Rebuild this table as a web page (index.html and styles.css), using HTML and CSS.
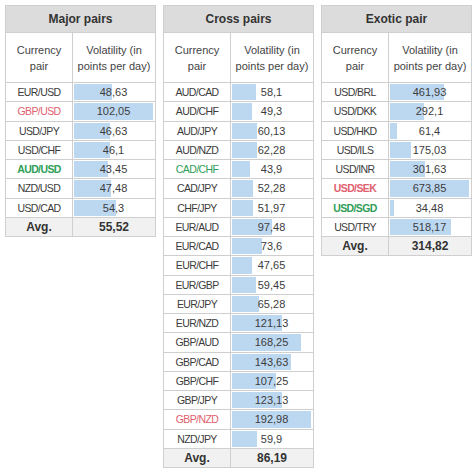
FILE: index.html
```html
<!DOCTYPE html>
<html>
<head>
<meta charset="utf-8">
<link rel="stylesheet" href="styles.css">
</head>
<body>
<div class="wrap">
  <table class="vt">
    <colgroup><col class="c1"><col class="c2"></colgroup>
    <thead>
      <tr class="title"><th colspan="2">Major pairs</th></tr>
      <tr class="head"><th>Currency<br>pair</th><th>Volatility (in<br>points per day)</th></tr>
    </thead>
    <tbody>
      <tr><td class="pair">EUR/USD</td><td class="vol"><div class="cell"><div class="fill" style="width:47.65%"></div><span class="val">48,63</span></div></td></tr>
      <tr><td class="pair red">GBP/USD</td><td class="vol"><div class="cell"><div class="fill" style="width:100%"></div><span class="val">102,05</span></div></td></tr>
      <tr><td class="pair">USD/JPY</td><td class="vol"><div class="cell"><div class="fill" style="width:45.69%"></div><span class="val">46,63</span></div></td></tr>
      <tr><td class="pair">USD/CHF</td><td class="vol"><div class="cell"><div class="fill" style="width:45.17%"></div><span class="val">46,1</span></div></td></tr>
      <tr><td class="pair green strong">AUD/USD</td><td class="vol"><div class="cell"><div class="fill" style="width:42.58%"></div><span class="val">43,45</span></div></td></tr>
      <tr><td class="pair">NZD/USD</td><td class="vol"><div class="cell"><div class="fill" style="width:46.53%"></div><span class="val">47,48</span></div></td></tr>
      <tr><td class="pair">USD/CAD</td><td class="vol"><div class="cell"><div class="fill" style="width:53.21%"></div><span class="val">54,3</span></div></td></tr>
      <tr class="avg"><td>Avg.</td><td>55,52</td></tr>
    </tbody>
  </table>

  <table class="vt">
    <colgroup><col class="c1"><col class="c2"></colgroup>
    <thead>
      <tr class="title"><th colspan="2">Cross pairs</th></tr>
      <tr class="head"><th>Currency<br>pair</th><th>Volatility (in<br>points per day)</th></tr>
    </thead>
    <tbody>
      <tr><td class="pair">AUD/CAD</td><td class="vol"><div class="cell"><div class="fill" style="width:30.11%"></div><span class="val">58,1</span></div></td></tr>
      <tr><td class="pair">AUD/CHF</td><td class="vol"><div class="cell"><div class="fill" style="width:25.55%"></div><span class="val">49,3</span></div></td></tr>
      <tr><td class="pair">AUD/JPY</td><td class="vol"><div class="cell"><div class="fill" style="width:31.16%"></div><span class="val">60,13</span></div></td></tr>
      <tr><td class="pair">AUD/NZD</td><td class="vol"><div class="cell"><div class="fill" style="width:32.27%"></div><span class="val">62,28</span></div></td></tr>
      <tr><td class="pair green">CAD/CHF</td><td class="vol"><div class="cell"><div class="fill" style="width:22.75%"></div><span class="val">43,9</span></div></td></tr>
      <tr><td class="pair">CAD/JPY</td><td class="vol"><div class="cell"><div class="fill" style="width:27.09%"></div><span class="val">52,28</span></div></td></tr>
      <tr><td class="pair">CHF/JPY</td><td class="vol"><div class="cell"><div class="fill" style="width:26.93%"></div><span class="val">51,97</span></div></td></tr>
      <tr><td class="pair">EUR/AUD</td><td class="vol"><div class="cell"><div class="fill" style="width:50.51%"></div><span class="val">97,48</span></div></td></tr>
      <tr><td class="pair">EUR/CAD</td><td class="vol"><div class="cell"><div class="fill" style="width:38.14%"></div><span class="val">73,6</span></div></td></tr>
      <tr><td class="pair">EUR/CHF</td><td class="vol"><div class="cell"><div class="fill" style="width:24.69%"></div><span class="val">47,65</span></div></td></tr>
      <tr><td class="pair">EUR/GBP</td><td class="vol"><div class="cell"><div class="fill" style="width:30.81%"></div><span class="val">59,45</span></div></td></tr>
      <tr><td class="pair">EUR/JPY</td><td class="vol"><div class="cell"><div class="fill" style="width:33.83%"></div><span class="val">65,28</span></div></td></tr>
      <tr><td class="pair">EUR/NZD</td><td class="vol"><div class="cell"><div class="fill" style="width:62.77%"></div><span class="val">121,13</span></div></td></tr>
      <tr><td class="pair">GBP/AUD</td><td class="vol"><div class="cell"><div class="fill" style="width:87.19%"></div><span class="val">168,25</span></div></td></tr>
      <tr><td class="pair">GBP/CAD</td><td class="vol"><div class="cell"><div class="fill" style="width:74.43%"></div><span class="val">143,63</span></div></td></tr>
      <tr><td class="pair">GBP/CHF</td><td class="vol"><div class="cell"><div class="fill" style="width:55.58%"></div><span class="val">107,25</span></div></td></tr>
      <tr><td class="pair">GBP/JPY</td><td class="vol"><div class="cell"><div class="fill" style="width:63.8%"></div><span class="val">123,13</span></div></td></tr>
      <tr><td class="pair red">GBP/NZD</td><td class="vol"><div class="cell"><div class="fill" style="width:100%"></div><span class="val">192,98</span></div></td></tr>
      <tr><td class="pair">NZD/JPY</td><td class="vol"><div class="cell"><div class="fill" style="width:31.04%"></div><span class="val">59,9</span></div></td></tr>
      <tr class="avg"><td>Avg.</td><td>86,19</td></tr>
    </tbody>
  </table>

  <table class="vt">
    <colgroup><col class="c1"><col class="c2"></colgroup>
    <thead>
      <tr class="title"><th colspan="2">Exotic pair</th></tr>
      <tr class="head"><th>Currency<br>pair</th><th>Volatility (in<br>points per day)</th></tr>
    </thead>
    <tbody>
      <tr><td class="pair">USD/BRL</td><td class="vol"><div class="cell"><div class="fill" style="width:68.55%"></div><span class="val">461,93</span></div></td></tr>
      <tr><td class="pair">USD/DKK</td><td class="vol"><div class="cell"><div class="fill" style="width:43.35%"></div><span class="val">292,1</span></div></td></tr>
      <tr><td class="pair">USD/HKD</td><td class="vol"><div class="cell"><div class="fill" style="width:9.11%"></div><span class="val">61,4</span></div></td></tr>
      <tr><td class="pair">USD/ILS</td><td class="vol"><div class="cell"><div class="fill" style="width:25.97%"></div><span class="val">175,03</span></div></td></tr>
      <tr><td class="pair">USD/INR</td><td class="vol"><div class="cell"><div class="fill" style="width:44.76%"></div><span class="val">301,63</span></div></td></tr>
      <tr><td class="pair red strong">USD/SEK</td><td class="vol"><div class="cell"><div class="fill" style="width:100%"></div><span class="val">673,85</span></div></td></tr>
      <tr><td class="pair green strong">USD/SGD</td><td class="vol"><div class="cell"><div class="fill" style="width:5.12%"></div><span class="val">34,48</span></div></td></tr>
      <tr><td class="pair">USD/TRY</td><td class="vol"><div class="cell"><div class="fill" style="width:76.9%"></div><span class="val">518,17</span></div></td></tr>
      <tr class="avg"><td>Avg.</td><td>314,82</td></tr>
    </tbody>
  </table>
</div>
</body>
</html>
```

FILE: styles.css
```css
html, body {
  margin: 0;
  padding: 0;
  background: #ffffff;
}
body {
  padding: 5px;
  font-family: "Liberation Sans", Arial, sans-serif;
  color: #3c3c3c;
}
.wrap {
  display: flex;
  align-items: flex-start;
  gap: 7px;
}
.vt {
  width: 150px;
  table-layout: fixed;
  border-collapse: collapse;
  border: 1px solid #cfcfcf;
  font-size: 11px;
}
.vt col.c1 { width: 67px; }
.vt col.c2 { width: 83px; }
.vt th, .vt td {
  border: 1px solid #cfcfcf;
  text-align: center;
  padding: 0;
  line-height: 12px;
}
.title th {
  height: 26px;
  background: #dcdcdc;
  font-size: 12px;
  font-weight: bold;
  color: #333;
}
.head th {
  height: 49px;
  font-weight: normal;
  font-size: 11px;
  line-height: 16px;
  color: #444;
}
.pair {
  font-size: 10.5px;
  letter-spacing: -0.6px;
}
.vt td.vol {
  padding: 1px 2px 1px 1px;
}
.cell {
  position: relative;
  height: 16.25px;
  display: flex;
  align-items: center;
  justify-content: center;
}
.fill {
  position: absolute;
  left: 0;
  top: 0;
  bottom: 0;
  background: #bcd7f0;
}
.val {
  position: relative;
}
.red { color: #e0606e; }
.green { color: #2f9e57; }
.strong { font-weight: bold; }
.avg td {
  height: 18.25px;
  background: #f1f1f1;
  font-weight: bold;
  font-size: 12px;
  color: #333;
}
```
